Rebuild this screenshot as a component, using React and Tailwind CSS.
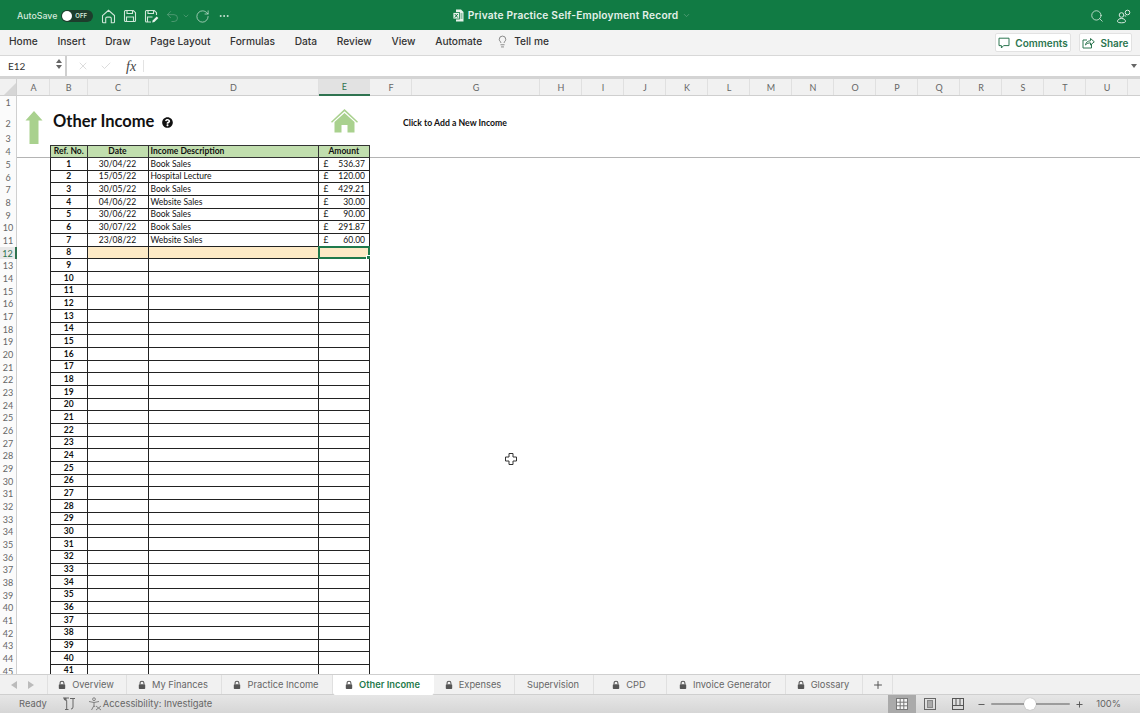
import React from "react";
import { Search, Lightbulb, RotateCw, Undo2, ChevronDown, Ellipsis, Minus, Plus, X, Check } from "lucide-react";
import { FaQuestionCircle } from "react-icons/fa";

const ui = "font-['Inter','Liberation_Sans',sans-serif]";
const sheet = "font-['Lato','Open_Sans',sans-serif]";

const Lock = () => (
  <svg width="8" height="10" viewBox="0 0 10 12" className="shrink-0">
    <path d="M2.6 5V3.6a2.4 2.4 0 0 1 4.8 0V5" fill="none" stroke="#555" strokeWidth="1.3" />
    <rect x="1" y="5" width="8" height="6" rx="1" fill="#555" />
  </svg>
);

const HomeIcon = () => (
  <svg width="15" height="15" viewBox="0 0 15 15" fill="none" stroke="#cfe6d8" strokeWidth="1.1">
    <path d="M1.5 6.6 7.5 1.3l6 5.3v6.2a1 1 0 0 1-1 1h-2.2V9.5a1.4 1.4 0 0 0-1.4-1.4H6.1a1.4 1.4 0 0 0-1.4 1.4v4.3H2.5a1 1 0 0 1-1-1z" />
  </svg>
);
const SaveIcon = () => (
  <svg width="14" height="14" viewBox="0 0 14 14" fill="none" stroke="#cfe6d8" strokeWidth="1.1">
    <path d="M1.5 2.5a1 1 0 0 1 1-1h7.8l2.2 2.2v7.8a1 1 0 0 1-1 1h-9a1 1 0 0 1-1-1z" />
    <path d="M4 1.5v3h5.5v-3M3.5 12.5V8h7v4.5" />
  </svg>
);
const SaveAsIcon = () => (
  <svg width="15" height="15" viewBox="0 0 15 15" fill="none" stroke="#cfe6d8" strokeWidth="1.1">
    <path d="M7 13H2.5a1 1 0 0 1-1-1V2.5a1 1 0 0 1 1-1h7.8l2.2 2.2V6" />
    <path d="M4 1.5v3h5.5v-3M3.5 13V8h5" />
    <path d="M8.2 13.6l.5-2.2 4-4 1.7 1.7-4 4z" fill="#e8f3ec" stroke="none" />
  </svg>
);
const CollabIcon = () => (
  <svg width="15" height="15" viewBox="0 0 15 15" fill="none" stroke="#dcece3" strokeWidth="1">
    <circle cx="5.5" cy="6" r="2.3" />
    <path d="M1.5 12.5c0-2 1.8-3 4-3s4 1 4 3c0 .8-1.8 1.3-4 1.3s-4-.5-4-1.3z" />
    <circle cx="11.5" cy="3.5" r="2.3" />
    <path d="M8.6 6.8c.5.2 1 .3 1.6.3" />
  </svg>
);
const FileIcon = () => (
  <svg width="11" height="13" viewBox="0 0 11 13">
    <path d="M3 .5h5l2.5 2.5v9.5H3z" fill="#e6f2ea" />
    <rect x="0" y="3.5" width="6.5" height="6.5" fill="#e6f2ea" stroke="#117b44" strokeWidth=".8" />
    <path d="M1.8 5 4.8 8.6M4.8 5 1.8 8.6" stroke="#117b44" strokeWidth="1" />
    <path d="M7.5 5h2M7.5 7h2M7.5 9h2" stroke="#117b44" strokeWidth=".8" />
  </svg>
);
const CommentIcon = () => (
  <svg width="12" height="12" viewBox="0 0 12 12" fill="none" stroke="#2c7650" strokeWidth="1">
    <path d="M1 1.2h10v7.4H5.6L3.4 11V8.6H1z" />
  </svg>
);
const ShareIcon = () => (
  <svg width="13" height="12" viewBox="0 0 13 12" fill="none" stroke="#2c7650" strokeWidth="1">
    <path d="M5 3H1v8h8.5V7" />
    <path d="M3.5 8c.3-2.6 2.4-4.2 5-4.2V1.5l3.8 3.3-3.8 3.2V5.9C6.5 5.8 4.8 6.5 3.5 8z" />
  </svg>
);
const GreenArrow = () => (
  <svg width="18" height="33" viewBox="0 0 18 33" className="block">
    <path d="M9 0 17.5 9.5H13.5V33H4.5V9.5H.5z" fill="#a9d18e" />
  </svg>
);
const GreenHouse = () => (
  <svg width="27" height="24" viewBox="0 0 27 24" className="block">
    <path d="M13.5 0 27 12.8l-1 1L13.5 2.2 1 13.8l-1-1z" fill="#a9d18e" />
    <path d="M13.5 4 23.5 13V23.5H16.5V16H10.5V23.5H3.5V13z" fill="#a9d18e" />
  </svg>
);
const MacroIcon = () => (
  <svg width="14" height="14" viewBox="0 0 14 14" fill="none" stroke="#666" strokeWidth="1">
    <path d="M1 1h6M4 1v2.5M3.5 3.5h1.2V12M3 12.5h3.5M8 1.5h5M11 1.5V10a2 2 0 0 1-2 2" />
    <circle cx="3" cy="2" r="1.2" fill="#666" stroke="none" />
  </svg>
);
const AccessIcon = () => (
  <svg width="14" height="14" viewBox="0 0 14 14" fill="none" stroke="#777" strokeWidth=".9">
    <circle cx="6" cy="2.2" r="1.4" />
    <path d="M1 4.5 6 5.5l5-1M6 5.5v3M6 8.5 3.5 13M6 8.5 7 10" />
    <path d="M8 9l5 4M13 9l-5 4" />
  </svg>
);
const NormalView = () => (
  <svg width="12" height="12" viewBox="0 0 12 12" fill="none">
    <rect x=".5" y=".5" width="11" height="11" fill="#f5f5f5" stroke="#777" />
    <path d="M4.2 .5v11M7.8 .5v11M.5 4.2h11M.5 7.8h11" stroke="#777" />
  </svg>
);
const PageView = () => (
  <svg width="12" height="12" viewBox="0 0 12 12" fill="none" stroke="#666">
    <rect x=".5" y=".5" width="11" height="11" />
    <rect x="3.5" y="2.5" width="5" height="7" fill="#aaa" stroke="#888" />
  </svg>
);
const BreakView = () => (
  <svg width="12" height="12" viewBox="0 0 12 12" fill="none" stroke="#555">
    <rect x=".5" y=".5" width="11" height="11" />
    <path d="M.5 7.5h11M4 .5v7M8 .5v7" />
  </svg>
);
const CrossCursor = () => (
  <svg width="12" height="12" viewBox="0 0 12 12">
    <path d="M4 .5h4V4h3.5v4H8v3.5H4V8H.5V4H4z" fill="#fff" stroke="#333" strokeWidth="1" />
  </svg>
);

function TitleBar() {
  return (
    <div className={`${ui} flex h-[30px] shrink-0 items-center bg-[#117b44] pt-[2px] text-[#d5e9dd]`}>
      <div className="flex flex-1 items-center pl-[17px]">
        <span className="text-[8.8px] font-medium">AutoSave</span>
        <div className="ml-[4px] flex h-[12px] w-[32px] items-center rounded-full bg-[#1d3d2c] pl-[1px]">
          <span className="h-[10px] w-[10px] rounded-full bg-white" />
          <span className="ml-[3px] text-[6px] font-semibold leading-none text-[#d5e9dd]">OFF</span>
        </div>
        <div className="ml-[8px] flex items-center gap-[7px]">
          <HomeIcon />
          <SaveIcon />
          <SaveAsIcon />
        </div>
        <Undo2 className="ml-[6px] text-[#5da27d]" size={15} strokeWidth={1.2} />
        <ChevronDown className="ml-[2px] text-[#5da27d]" size={8} />
        <RotateCw className="ml-[5px] text-[#d5e9dd]" size={15} strokeWidth={1.1} />
        <Ellipsis className="ml-[8px]" size={12} strokeWidth={2} />
      </div>
      <div className="flex items-center gap-[4px] pr-[4px]">
        <FileIcon />
        <span className="text-[10.2px] font-semibold tracking-[0.2px] text-[#e4f1e9]">Private Practice Self-Employment Record</span>
        <ChevronDown className="text-[#5da27d]" size={9} />
      </div>
      <div className="flex flex-1 items-center justify-end gap-[12px] pr-[9px]">
        <Search className="text-[#e4f1e9]" size={14} strokeWidth={1.3} />
        <CollabIcon />
      </div>
    </div>
  );
}

function Ribbon() {
  const items = ["Home", "Insert", "Draw", "Page Layout", "Formulas", "Data", "Review", "View", "Automate"];
  return (
    <div className={`${ui} flex h-[26px] shrink-0 items-center border-b border-[#d8d8d8] bg-[#f3f3f3] pl-[9px] pr-[8px] text-[#333]`}>
      <div className="flex items-center gap-[19.7px] pb-[2px] text-[10.2px] font-medium">
        {items.map((t) => (
          <span key={t}>{t}</span>
        ))}
      </div>
      <Lightbulb className="mb-[2px] ml-[14px] text-[#444]" size={13} strokeWidth={1.1} />
      <span className="mb-[2px] ml-[5px] text-[10.2px] font-medium">Tell me</span>
      <div className="ml-auto flex items-center gap-[8px] text-[10px] font-semibold text-[#2c7650]">
        <button className="flex h-[19px] w-[76px] items-center justify-center gap-[5px] rounded-[2px] border border-[#e2e2e2] bg-white pt-px">
          <CommentIcon />
          Comments
        </button>
        <button className="flex h-[19px] w-[53px] items-center justify-center gap-[5px] rounded-[2px] border border-[#e2e2e2] bg-white pt-px">
          <ShareIcon />
          Share
        </button>
      </div>
    </div>
  );
}

function FormulaBar() {
  return (
    <div className="flex h-[23px] shrink-0 items-stretch border-b-[3px] border-[#d4d4d4] bg-white">
      <div className={`${sheet} relative flex w-[67px] items-center border-r-2 border-[#cfcfcf] pl-[8px] text-[10px] text-[#333]`}>
        E12
        <div className="absolute right-[3px] top-[3px] flex flex-col gap-[2px]">
          <span className="h-0 w-0 border-x-[3px] border-b-[4px] border-x-transparent border-b-[#666]" />
          <span className="h-0 w-0 border-x-[3px] border-t-[4px] border-x-transparent border-t-[#666]" />
        </div>
      </div>
      <div className="flex w-[76px] items-center pl-[10px] text-[#c9c9c9]">
        <X size={12} strokeWidth={1.3} />
        <Check className="ml-[11px]" size={12} strokeWidth={1.3} />
        <span className="ml-[14px] font-['Liberation_Serif',serif] text-[14px] italic text-[#444]">fx</span>
      </div>
      <div className="my-[4px] w-px bg-[#e3e3e3]" />
      <div className="flex flex-1 items-center justify-end pr-[3px]">
        <span className="h-0 w-0 border-x-[3px] border-t-[4px] border-x-transparent border-t-[#666]" />
      </div>
    </div>
  );
}

const COLS = [
  ["A", "w-[33px]"],
  ["B", "w-[37.5px]"],
  ["C", "w-[61px]"],
  ["D", "w-[170px]"],
  ["E", "w-[51.5px]"],
  ["F", "w-[42px]"],
  ["G", "w-[128px]"],
  ["H", "w-[42px]"],
  ["I", "w-[42px]"],
  ["J", "w-[42px]"],
  ["K", "w-[42px]"],
  ["L", "w-[42px]"],
  ["M", "w-[42px]"],
  ["N", "w-[42px]"],
  ["O", "w-[42px]"],
  ["P", "w-[42px]"],
  ["Q", "w-[42px]"],
  ["R", "w-[42px]"],
  ["S", "w-[42px]"],
  ["T", "w-[42px]"],
  ["U", "w-[42px]"],
];

function ColumnHeaders() {
  return (
    <div className={`${sheet} flex h-[17px] shrink-0 border-b border-[#cfcfcf] bg-[#f1f1f1] text-[9px] text-[#666]`}>
      <div className="flex w-[17px] items-end justify-end border-r border-[#d0d0d0]">
        <span className="h-0 w-0 border-b-[12px] border-l-[12px] border-b-[#d6d6d6] border-l-transparent" />
      </div>
      {COLS.map(([c, w]) => (
        <div
          key={c}
          className={
            c === "E"
              ? `${w} -mb-px flex items-center justify-center border-b-2 border-[#2f7350] bg-[#e2e2e2] pt-px text-[#2f7350]`
              : `${w} flex items-center justify-center border-r border-[#e0e0e0] pl-px pt-px`
          }
        >
          {c}
        </div>
      ))}
      <div className="flex-1" />
    </div>
  );
}

function RowNum({ n, cls }) {
  const on = n === 12;
  return (
    <div
      className={`${cls} flex w-[17px] shrink-0 items-center justify-center border-r text-[9px] ${
        on ? "border-r-2 border-[#2f7350] bg-[#e8e8e8] text-[#2f7350]" : "border-[#d0d0d0] bg-[#fbfbfb] text-[#666]"
      }`}
    >
      {n}
    </div>
  );
}

const DATA = [
  ["30/04/22", "Book Sales", "536.37"],
  ["15/05/22", "Hospital Lecture", "120.00"],
  ["30/05/22", "Book Sales", "429.21"],
  ["04/06/22", "Website Sales", "30.00"],
  ["30/06/22", "Book Sales", "90.00"],
  ["30/07/22", "Book Sales", "291.87"],
  ["23/08/22", "Website Sales", "60.00"],
];

function DataRow({ i }) {
  const d = DATA[i];
  const sel = i === 7;
  const cell = "flex h-full items-center border-b border-r border-[#222]";
  return (
    <div className="flex h-[12.675px] shrink-0 text-[8.5px] leading-none text-[#111]">
      <RowNum n={i + 5} cls="h-full" />
      <div className="w-[33px] shrink-0" />
      <div className={`${cell} w-[37.5px] shrink-0 justify-center border-l font-bold`}>{i + 1}</div>
      <div className={`${cell} w-[61px] shrink-0 justify-center ${sel ? "bg-[#fdeac6]" : ""}`}>{d && d[0]}</div>
      <div className={`${cell} w-[170px] shrink-0 pl-[2px] ${sel ? "bg-[#fdeac6]" : ""}`}>{d && d[1]}</div>
      <div className={`${cell} relative w-[51.5px] shrink-0 justify-between pl-[5px] pr-[4px] ${sel ? "bg-[#fdeac6]" : ""}`}>
        {d && <span>£</span>}
        {d && <span>{d[2]}</span>}
        {sel && (
          <span className="absolute -left-px -top-px h-[calc(100%+2px)] w-[calc(100%+2px)] border-2 border-[#1f7a4c]">
            <span className="absolute -bottom-[3px] -right-[3px] h-[5px] w-[5px] border border-white bg-[#1f7a4c]" />
          </span>
        )}
      </div>
      <div className="flex-1" />
    </div>
  );
}

function TopRows() {
  const head = "flex h-full items-center border-y border-r border-[#333] bg-[#c1deae] font-bold";
  return (
    <div className="relative flex h-[62px] shrink-0 flex-col border-b border-[#b4b4b4]">
      <div className="flex h-[49px] shrink-0">
        <div className="flex w-[17px] shrink-0 flex-col text-[9px] text-[#666]">
          <RowNum n={1} cls="h-[14px]" />
          <RowNum n={2} cls="h-[22.5px] pt-[5px]" />
          <RowNum n={3} cls="h-[12.5px]" />
        </div>
        <div className="flex w-[33px] shrink-0 justify-center pt-[15px]">
          <div>
            <GreenArrow />
          </div>
        </div>
        <div className="flex w-[268.5px] shrink-0 items-center gap-[8px] pt-[1px] pl-[3px]">
          <span className="text-[16.5px] font-bold leading-none text-[#111]">Other Income</span>
          <FaQuestionCircle className="mt-[2px] text-[#111]" size={11} />
        </div>
        <div className="flex w-[51.5px] shrink-0 justify-center pt-[13px]">
          <div>
            <GreenHouse />
          </div>
        </div>
        <div className="flex flex-1 items-center pl-[33px] pt-[5px] text-[8.7px] font-bold text-[#111]">Click to Add a New Income</div>
      </div>
      <div className="flex h-[13px] shrink-0 text-[8.5px] leading-none text-[#111]">
        <RowNum n={4} cls="h-full" />
        <div className="w-[33px] shrink-0" />
        <div className={`${head} w-[37.5px] shrink-0 justify-center border-l`}>Ref. No.</div>
        <div className={`${head} w-[61px] shrink-0 justify-center`}>Date</div>
        <div className={`${head} w-[170px] shrink-0 pl-[2px]`}>Income Description</div>
        <div className={`${head} w-[51.5px] shrink-0 justify-center`}>Amount</div>
      </div>
    </div>
  );
}

const ROWS = Array.from({ length: 41 }, (_, i) => i);

function Sheet() {
  return (
    <div className={`${sheet} relative min-h-0 flex-1 overflow-hidden bg-white`}>
      <TopRows />
      {ROWS.map((i) => (
        <DataRow key={i} i={i} />
      ))}
      <div className="absolute left-[505px] top-[357px]">
        <CrossCursor />
      </div>
    </div>
  );
}

function Tab({ label, w, lock = true, active }) {
  return (
    <div
      className={`${w} flex shrink-0 items-center justify-center gap-[6px] pr-[2px] ${
        active ? "h-[20px] self-start rounded-b-[2px] bg-white font-semibold text-[#1f7a4c] shadow-[0_1px_0_#bbb]" : "border-r border-[#e0e0e0] text-[#666]"
      }`}
    >
      {lock && <Lock />}
      <span>{label}</span>
    </div>
  );
}

function Tabs() {
  return (
    <div className={`${ui} flex h-[21px] shrink-0 items-stretch border-y border-[#cfcfcf] bg-[#f1f1f1] text-[9.3px]`}>
      <div className="flex w-[48px] shrink-0 items-center gap-[11px] border-r border-[#e0e0e0] pl-[11px]">
        <span className="h-0 w-0 border-y-[4px] border-r-[6px] border-y-transparent border-r-[#bbb]" />
        <span className="h-0 w-0 border-y-[4px] border-l-[6px] border-y-transparent border-l-[#bbb]" />
      </div>
      <Tab label="Overview" w="w-[79px]" />
      <Tab label="My Finances" w="w-[95px]" />
      <Tab label="Practice Income" w="w-[111px]" />
      <Tab label="Other Income" w="w-[101px]" active />
      <Tab label="Expenses" w="w-[81px]" />
      <Tab label="Supervision" w="w-[79px]" lock={false} />
      <Tab label="CPD" w="w-[73px]" />
      <Tab label="Invoice Generator" w="w-[119px]" />
      <Tab label="Glossary" w="w-[77px]" />
      <div className="flex w-[30px] shrink-0 items-center justify-center border-r border-[#e0e0e0] text-[#555]">
        <Plus size={12} strokeWidth={2} />
      </div>
    </div>
  );
}

function StatusBar() {
  return (
    <div className={`${ui} flex h-[18px] shrink-0 items-center bg-gradient-to-b from-[#e6e6e6] to-[#d6d6d6] pl-[19px] text-[9.4px] text-[#666]`}>
      <span>Ready</span>
      <div className="ml-[15px]">
        <MacroIcon />
      </div>
      <div className="ml-[12px]">
        <AccessIcon />
      </div>
      <span className="ml-[1px]">Accessibility: Investigate</span>
      <div className="ml-auto flex h-full items-center pr-[19px]">
        <div className="flex h-full w-[28px] items-center justify-center bg-[#aaaaaa]">
          <NormalView />
        </div>
        <div className="flex w-[28px] justify-center">
          <PageView />
        </div>
        <div className="flex w-[28px] justify-center">
          <BreakView />
        </div>
        <Minus className="ml-[5px] text-[#555]" size={9} strokeWidth={2.5} />
        <div className="relative ml-[5px] h-[2px] w-[79px] rounded bg-[#9c9c9c]">
          <span className="absolute left-[33px] -top-[5px] h-[12px] w-[12px] rounded-full bg-white shadow-[0_0_1px_#888]" />
        </div>
        <Plus className="ml-[5px] text-[#555]" size={9} strokeWidth={2.5} />
        <span className="ml-[12px]">100%</span>
      </div>
    </div>
  );
}

export default function App() {
  return (
    <div className="flex h-[713px] w-[1140px] flex-col overflow-hidden bg-white">
      <TitleBar />
      <Ribbon />
      <FormulaBar />
      <ColumnHeaders />
      <Sheet />
      <Tabs />
      <StatusBar />
    </div>
  );
}
